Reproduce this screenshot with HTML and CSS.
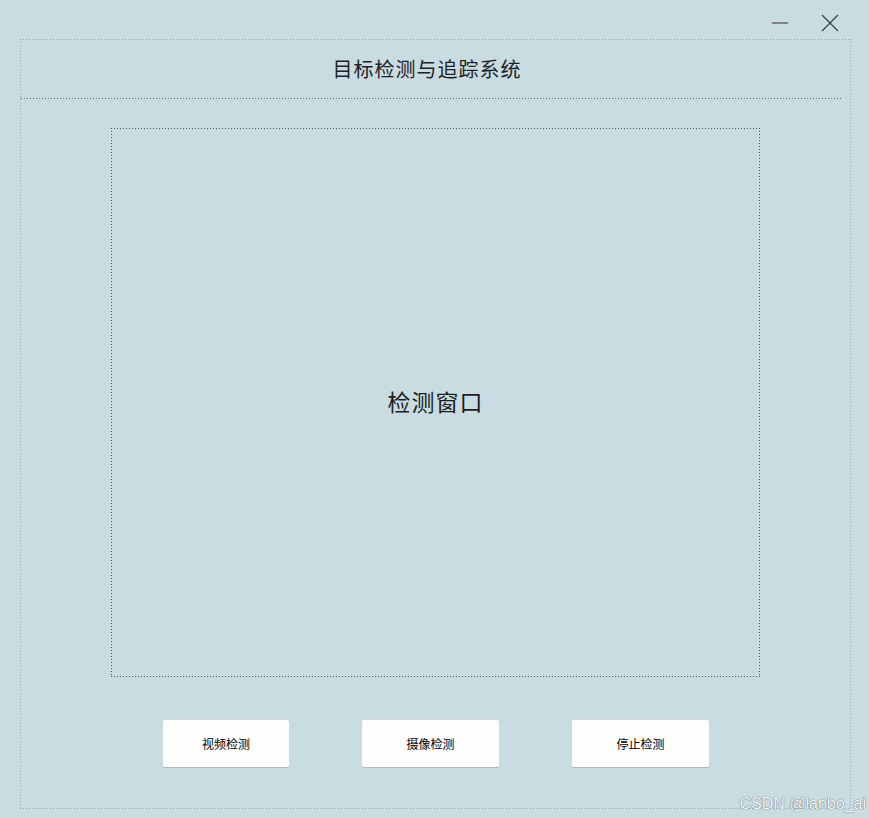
FILE: index.html
```html
<!DOCTYPE html>
<html lang="zh">
<head>
<meta charset="utf-8">
<link rel="stylesheet" href="styles.css">
</head>
<body>
<div class="topbar">
  <svg class="ctl" width="18" height="18" viewBox="0 0 18 18"><line x1="1" y1="9" x2="17" y2="9" stroke="#808488" stroke-width="2"/></svg>
  <svg class="ctl close" width="18" height="18" viewBox="0 0 18 18"><path d="M1 1 L17 17 M17 1 L1 17" stroke="#3a3f44" stroke-width="1.2" fill="none"/></svg>
</div>
<div class="frame">
  <div class="header"><span class="title">目标检测与追踪系统</span></div>
  <div class="viewer"><span class="viewer-text">检测窗口</span></div>
  <div class="buttons">
    <button class="btn b1">视频检测</button>
    <button class="btn b2">摄像检测</button>
    <button class="btn b3">停止检测</button>
  </div>
</div>
<div class="watermark">CSDN @lanbo_ai</div>
</body>
</html>
```
FILE: styles.css
```css
html, body {
  margin: 0;
  padding: 0;
}
body {
  width: 869px;
  height: 818px;
  background: #c8dce2;
  font-family: "Noto Sans CJK SC", "Liberation Sans", sans-serif;
  position: relative;
  overflow: hidden;
}
.topbar {
  height: 39px;
  display: flex;
  justify-content: flex-end;
  align-items: flex-start;
  padding-right: 30px;
  box-sizing: border-box;
}
.ctl {
  margin-top: 14px;
  margin-left: 32px;
}
.close { margin-left: 32px; }
.frame {
  margin-left: 20px;
  width: 831px;
  height: 770px;
  box-sizing: border-box;
  background:
    repeating-linear-gradient(90deg, #9aa6ab 0 1px, transparent 1px 3px) top left / 100% 1px no-repeat,
    repeating-linear-gradient(90deg, #9aa6ab 0 1px, transparent 1px 3px) bottom left / 100% 1px no-repeat,
    repeating-linear-gradient(180deg, #9aa6ab 0 1px, transparent 1px 3px) top left / 1px 100% no-repeat,
    repeating-linear-gradient(180deg, #9aa6ab 0 1px, transparent 1px 3px) top right / 1px 100% no-repeat;
  padding: 1px;
  display: flex;
  flex-direction: column;
}
.header {
  height: 59px;
  margin-right: 9px;
  display: flex;
  align-items: center;
  justify-content: center;
  background: repeating-linear-gradient(90deg, #5e6a70 0 1px, transparent 1px 3px) bottom left / 100% 1px no-repeat;
  padding-bottom: 2px;
  box-sizing: border-box;
}
.title {
  font-size: 20px;
  color: #1e2226;
  letter-spacing: 1px;
  margin-right: 8px;
}
.viewer {
  margin-top: 29px;
  margin-left: 90px;
  width: 649px;
  height: 549px;
  box-sizing: border-box;
  background:
    repeating-linear-gradient(90deg, #4c585e 0 1px, transparent 1px 3px) top left / 100% 1px no-repeat,
    repeating-linear-gradient(90deg, #4c585e 0 1px, transparent 1px 3px) bottom left / 100% 1px no-repeat,
    repeating-linear-gradient(180deg, #4c585e 0 1px, transparent 1px 3px) top left / 1px 100% no-repeat,
    repeating-linear-gradient(180deg, #4c585e 0 1px, transparent 1px 3px) top right / 1px 100% no-repeat;
  display: flex;
  align-items: center;
  justify-content: center;
}
.viewer-text {
  font-size: 23px;
  color: #1a1e22;
  letter-spacing: 1px;
  margin-top: -4px;
}
.buttons {
  margin-top: 42px;
  padding-left: 141px;
  display: flex;
}
.btn {
  height: 49px;
  background: #fdfdfd;
  border: 1px solid #d4d8da;
  border-bottom-color: #b4b8ba;
  border-radius: 3px;
  font-family: "Noto Sans CJK SC", sans-serif;
  font-size: 12px;
  color: #000;
  padding: 0;
}
.b1 { width: 128px; }
.b2 { width: 139px; margin-left: 71px; }
.b3 { width: 139px; margin-left: 71px; }
.watermark {
  position: absolute;
  right: 3px;
  bottom: 5px;
  font-family: "Liberation Sans", Arial, sans-serif;
  font-size: 16px;
  color: #f4f6f7;
  text-shadow: 0 0 1px #6a7478, 0 0 1px #6a7478;
  line-height: 18px;
}
```
